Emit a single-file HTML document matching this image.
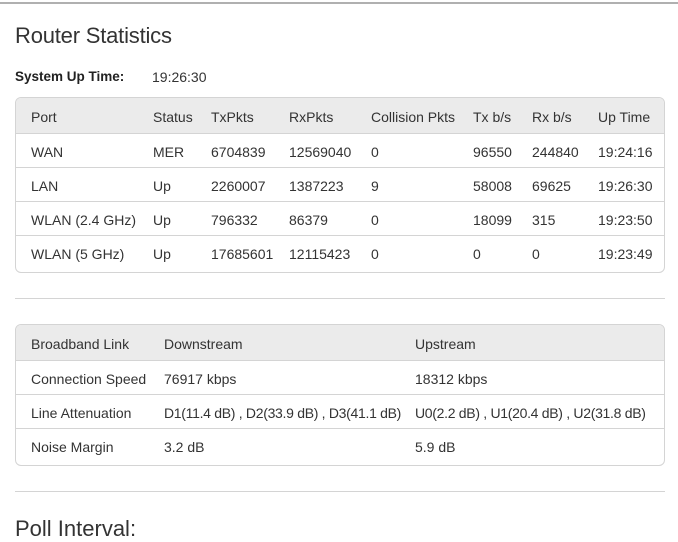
<!DOCTYPE html>
<html><head><meta charset="utf-8"><style>
*{margin:0;padding:0;box-sizing:border-box}
body{width:678px;height:527px;overflow:hidden;background:#fff;font-family:"Liberation Sans",sans-serif;color:#333;font-size:14px;position:relative}
.top{position:absolute;left:0;top:2px;width:678px;height:2px;background:#b0b0b0}
h1{position:absolute;left:15px;top:23px;font-size:22px;font-weight:normal;color:#333;letter-spacing:-0.2px}
.lbl{position:absolute;left:15px;top:69px;font-weight:bold;font-size:13.5px;color:#222}
.val{position:absolute;left:152px;top:69px}
.tbl{position:absolute;left:15px;width:650px;border:1px solid #d4d4d4;border-radius:6px;overflow:hidden}
.row{position:relative;height:34px;border-top:1px solid #d4d4d4}
.row:first-child{border-top:none;background:#ebebeb;height:35px}
.row span{position:absolute;top:10px;white-space:nowrap}
.row:first-child span{top:11px}
.hr{position:absolute;left:15px;width:650px;height:1px;background:#d4d4d4}
.poll{position:absolute;left:15px;top:516px;font-size:22px;color:#333}
</style></head><body>
<div class="top"></div>
<h1>Router Statistics</h1>
<div class="lbl">System Up Time:</div><div class="val">19:26:30</div>
<div class="tbl" style="top:97px;height:176px">
<div class="row"><span style="left:15px">Port</span><span style="left:137px">Status</span><span style="left:195px">TxPkts</span><span style="left:273px">RxPkts</span><span style="left:355px">Collision Pkts</span><span style="left:457px">Tx b/s</span><span style="left:516px">Rx b/s</span><span style="left:582px">Up Time</span></div>
<div class="row"><span style="left:15px">WAN</span><span style="left:137px">MER</span><span style="left:195px">6704839</span><span style="left:273px">12569040</span><span style="left:355px">0</span><span style="left:457px">96550</span><span style="left:516px">244840</span><span style="left:582px">19:24:16</span></div>
<div class="row"><span style="left:15px">LAN</span><span style="left:137px">Up</span><span style="left:195px">2260007</span><span style="left:273px">1387223</span><span style="left:355px">9</span><span style="left:457px">58008</span><span style="left:516px">69625</span><span style="left:582px">19:26:30</span></div>
<div class="row"><span style="left:15px">WLAN (2.4 GHz)</span><span style="left:137px">Up</span><span style="left:195px">796332</span><span style="left:273px">86379</span><span style="left:355px">0</span><span style="left:457px">18099</span><span style="left:516px">315</span><span style="left:582px">19:23:50</span></div>
<div class="row"><span style="left:15px">WLAN (5 GHz)</span><span style="left:137px">Up</span><span style="left:195px">17685601</span><span style="left:273px">12115423</span><span style="left:355px">0</span><span style="left:457px">0</span><span style="left:516px">0</span><span style="left:582px">19:23:49</span></div>
</div>
<div class="hr" style="top:298px"></div>
<div class="tbl" style="top:324px;height:142px">
<div class="row"><span style="left:15px">Broadband Link</span><span style="left:148px">Downstream</span><span style="left:399px">Upstream</span></div>
<div class="row"><span style="left:15px">Connection Speed</span><span style="left:148px">76917 kbps</span><span style="left:399px">18312 kbps</span></div>
<div class="row"><span style="left:15px">Line Attenuation</span><span style="left:148px;letter-spacing:-0.3px">D1(11.4 dB) , D2(33.9 dB) , D3(41.1 dB)</span><span style="left:399px;letter-spacing:-0.3px">U0(2.2 dB) , U1(20.4 dB) , U2(31.8 dB)</span></div>
<div class="row"><span style="left:15px">Noise Margin</span><span style="left:148px">3.2 dB</span><span style="left:399px">5.9 dB</span></div>
</div>
<div class="hr" style="top:491px"></div>
<div class="poll">Poll Interval:</div>
</body></html>
